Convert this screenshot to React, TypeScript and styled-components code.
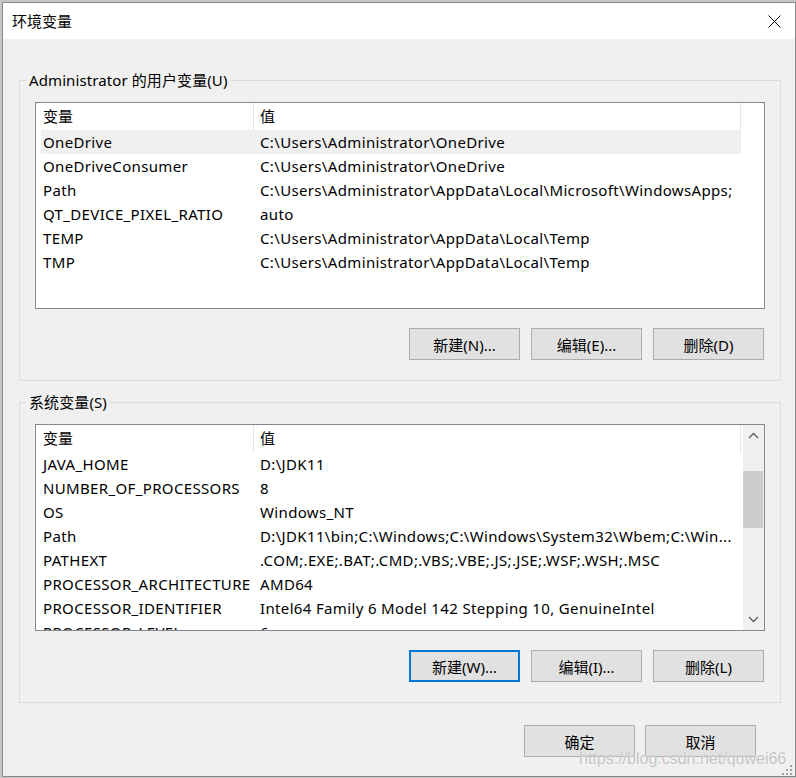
import styled, { createGlobalStyle } from "styled-components";

const GlobalStyle = createGlobalStyle`
  html, body {
    margin: 0;
    padding: 0;
  }
  body {
    width: 796px;
    height: 778px;
    overflow: hidden;
    background: #c6c6c6;
    font-family: "Noto Sans", "Noto Sans CJK SC", sans-serif;
    color: #000;
  }
`;

type Entry = { name: string; value: string };

const userVars: Entry[] = [
  { name: "OneDrive", value: "C:\\Users\\Administrator\\OneDrive" },
  { name: "OneDriveConsumer", value: "C:\\Users\\Administrator\\OneDrive" },
  { name: "Path", value: "C:\\Users\\Administrator\\AppData\\Local\\Microsoft\\WindowsApps;" },
  { name: "QT_DEVICE_PIXEL_RATIO", value: "auto" },
  { name: "TEMP", value: "C:\\Users\\Administrator\\AppData\\Local\\Temp" },
  { name: "TMP", value: "C:\\Users\\Administrator\\AppData\\Local\\Temp" },
];

const systemVars: Entry[] = [
  { name: "JAVA_HOME", value: "D:\\JDK11" },
  { name: "NUMBER_OF_PROCESSORS", value: "8" },
  { name: "OS", value: "Windows_NT" },
  { name: "Path", value: "D:\\JDK11\\bin;C:\\Windows;C:\\Windows\\System32\\Wbem;C:\\Win..." },
  { name: "PATHEXT", value: ".COM;.EXE;.BAT;.CMD;.VBS;.VBE;.JS;.JSE;.WSF;.WSH;.MSC" },
  { name: "PROCESSOR_ARCHITECTURE", value: "AMD64" },
  { name: "PROCESSOR_IDENTIFIER", value: "Intel64 Family 6 Model 142 Stepping 10, GenuineIntel" },
  { name: "PROCESSOR_LEVEL", value: "6" },
];

const VariableList = ({ rows, selected, scroll }: { rows: Entry[]; selected?: number; scroll?: boolean }) => (
  <ListView>
    <Columns>
      <HeaderRow>
        <HeaderCell $width={213} $pad={2}>变量</HeaderCell>
        <HeaderCell $width={487} $pad={6}>值</HeaderCell>
      </HeaderRow>
      {rows.map((r, i) => (
        <Row key={r.name} $selected={i === selected}>
          <Cell $width={213} $pad={2}>{r.name}</Cell>
          <Cell $width={487} $pad={6}>{r.value}</Cell>
        </Row>
      ))}
    </Columns>
    {scroll && (
      <ScrollBar>
        <ArrowButton>
          <svg width="11" height="7" viewBox="0 0 11 7">
            <path d="M1 6 L5.5 1.5 L10 6" fill="none" stroke="#606060" strokeWidth="1.4" />
          </svg>
        </ArrowButton>
        <Track>
          <Thumb />
        </Track>
        <ArrowButton>
          <svg width="11" height="7" viewBox="0 0 11 7">
            <path d="M1 1 L5.5 5.5 L10 1" fill="none" stroke="#606060" strokeWidth="1.4" />
          </svg>
        </ArrowButton>
      </ScrollBar>
    )}
  </ListView>
);

const App = () => {
  return (
    <>
      <GlobalStyle />
      <Window>
        <TitleBar>
          <Title>环境变量</Title>
          <CloseButton>
            <svg width="13" height="13" viewBox="0 0 13 13">
              <path d="M0.5 0.5 L12.5 12.5 M12.5 0.5 L0.5 12.5" stroke="#000" strokeWidth="1" />
            </svg>
          </CloseButton>
        </TitleBar>
        <Body>
          <GroupBox>
            <Legend>Administrator 的用户变量(U)</Legend>
            <GroupContent>
              <VariableList rows={userVars} selected={0} />
              <ButtonRow>
                <Button>新建(N)...</Button>
                <Button>编辑(E)...</Button>
                <Button>删除(D)</Button>
              </ButtonRow>
            </GroupContent>
          </GroupBox>
          <GroupBox $spaced>
            <Legend>系统变量(S)</Legend>
            <GroupContent>
              <VariableList rows={systemVars} scroll />
              <ButtonRow>
                <Button $focused>新建(W)...</Button>
                <Button>编辑(I)...</Button>
                <Button>删除(L)</Button>
              </ButtonRow>
            </GroupContent>
          </GroupBox>
          <Footer>
            <Button>确定</Button>
            <Button>取消</Button>
          </Footer>
        </Body>
        <Watermark>https://blog.csdn.net/quwei66</Watermark>
        <Grip>
          <svg width="11" height="11" viewBox="0 0 11 11" fill="#a0a0a0">
            <rect x="8" y="0" width="2" height="2" />
            <rect x="4" y="4" width="2" height="2" />
            <rect x="8" y="4" width="2" height="2" />
            <rect x="0" y="8" width="2" height="2" />
            <rect x="4" y="8" width="2" height="2" />
            <rect x="8" y="8" width="2" height="2" />
          </svg>
        </Grip>
      </Window>
    </>
  );
};

export default App;

const Window = styled.div`
  position: relative;
  box-sizing: border-box;
  width: 794px;
  height: 775px;
  margin: 2px 0 0 2px;
  border: 1px solid #8a8a8a;
  background: #f0f0f0;
  display: flex;
  flex-direction: column;
`;

const TitleBar = styled.div`
  height: 36px;
  background: #fff;
  display: flex;
  align-items: center;
  justify-content: space-between;
  padding-left: 9px;
`;

const Title = styled.span`
  font-size: 15px;
  line-height: 20px;
  margin-top: -1px;
`;

const CloseButton = styled.div`
  display: flex;
  align-items: center;
  margin-right: 14px;
`;

const Body = styled.div`
  padding: 31px 14px 0 16px;
  display: flex;
  flex-direction: column;
`;

const GroupBox = styled.fieldset<{ $spaced?: boolean }>`
  margin: ${(p) => (p.$spaced ? "11px" : "0")} 0 0 0;
  padding: 0;
  min-width: 0;
  border: 1px solid #dcdcdc;
`;

const Legend = styled.legend`
  margin-left: 6px;
  padding: 0 3px;
  font-size: 15px;
  line-height: 20px;
  letter-spacing: 0.1px;
`;

const GroupContent = styled.div`
  padding: 12px 15px 20px;
`;

const ListView = styled.div`
  box-sizing: border-box;
  height: 207px;
  border: 1px solid #828790;
  background: #fff;
  display: flex;
  overflow: hidden;
`;

const Columns = styled.div`
  flex: 1;
  padding-left: 5px;
  overflow: hidden;
`;

const HeaderRow = styled.div`
  display: flex;
  height: 27px;
`;

const HeaderCell = styled.div<{ $width: number; $pad: number }>`
  box-sizing: border-box;
  width: ${(p) => p.$width}px;
  padding-left: ${(p) => p.$pad}px;
  border-right: 1px solid #e5e5e5;
  font-size: 15px;
  line-height: 27px;
`;

const Row = styled.div<{ $selected?: boolean }>`
  display: flex;
  width: 700px;
  height: 24px;
  background: ${(p) => (p.$selected ? "#f0f0f0" : "transparent")};
`;

const Cell = styled.div<{ $width: number; $pad: number }>`
  box-sizing: border-box;
  flex: none;
  width: ${(p) => p.$width}px;
  padding-left: ${(p) => p.$pad}px;
  font-size: 15px;
  line-height: 24px;
  letter-spacing: 0.35px;
  white-space: nowrap;
  overflow: hidden;
`;

const ScrollBar = styled.div`
  width: 21px;
  background: #f0f0f0;
  display: flex;
  flex-direction: column;
`;

const ArrowButton = styled.div`
  height: 21px;
  display: flex;
  align-items: center;
  justify-content: center;
`;

const Track = styled.div`
  flex: 1;
  padding-top: 25px;
`;

const Thumb = styled.div`
  height: 57px;
  margin: 0 1px 0 0;
  background: #cdcdcd;
`;

const ButtonRow = styled.div`
  display: flex;
  justify-content: flex-end;
  gap: 11px;
  margin: 19px 1px 0 0;
`;

const Button = styled.div<{ $focused?: boolean }>`
  box-sizing: border-box;
  width: 111px;
  height: 32px;
  background: #e1e1e1;
  border: ${(p) => (p.$focused ? "2px solid #0078d7" : "1px solid #adadad")};
  display: flex;
  align-items: center;
  justify-content: center;
  font-size: 15px;
`;

const Footer = styled.div`
  display: flex;
  justify-content: flex-end;
  gap: 10px;
  margin: 22px 25px 0 0;
`;

const Watermark = styled.div`
  position: absolute;
  left: 576px;
  top: 746px;
  font-family: "Liberation Sans", Arial, sans-serif;
  font-size: 16px;
  line-height: 20px;
  color: #c4c4c4;
  text-shadow: 0 0 1px #fff;
  white-space: nowrap;
`;

const Grip = styled.div`
  position: absolute;
  right: 2px;
  bottom: 0;
  display: flex;
`;
